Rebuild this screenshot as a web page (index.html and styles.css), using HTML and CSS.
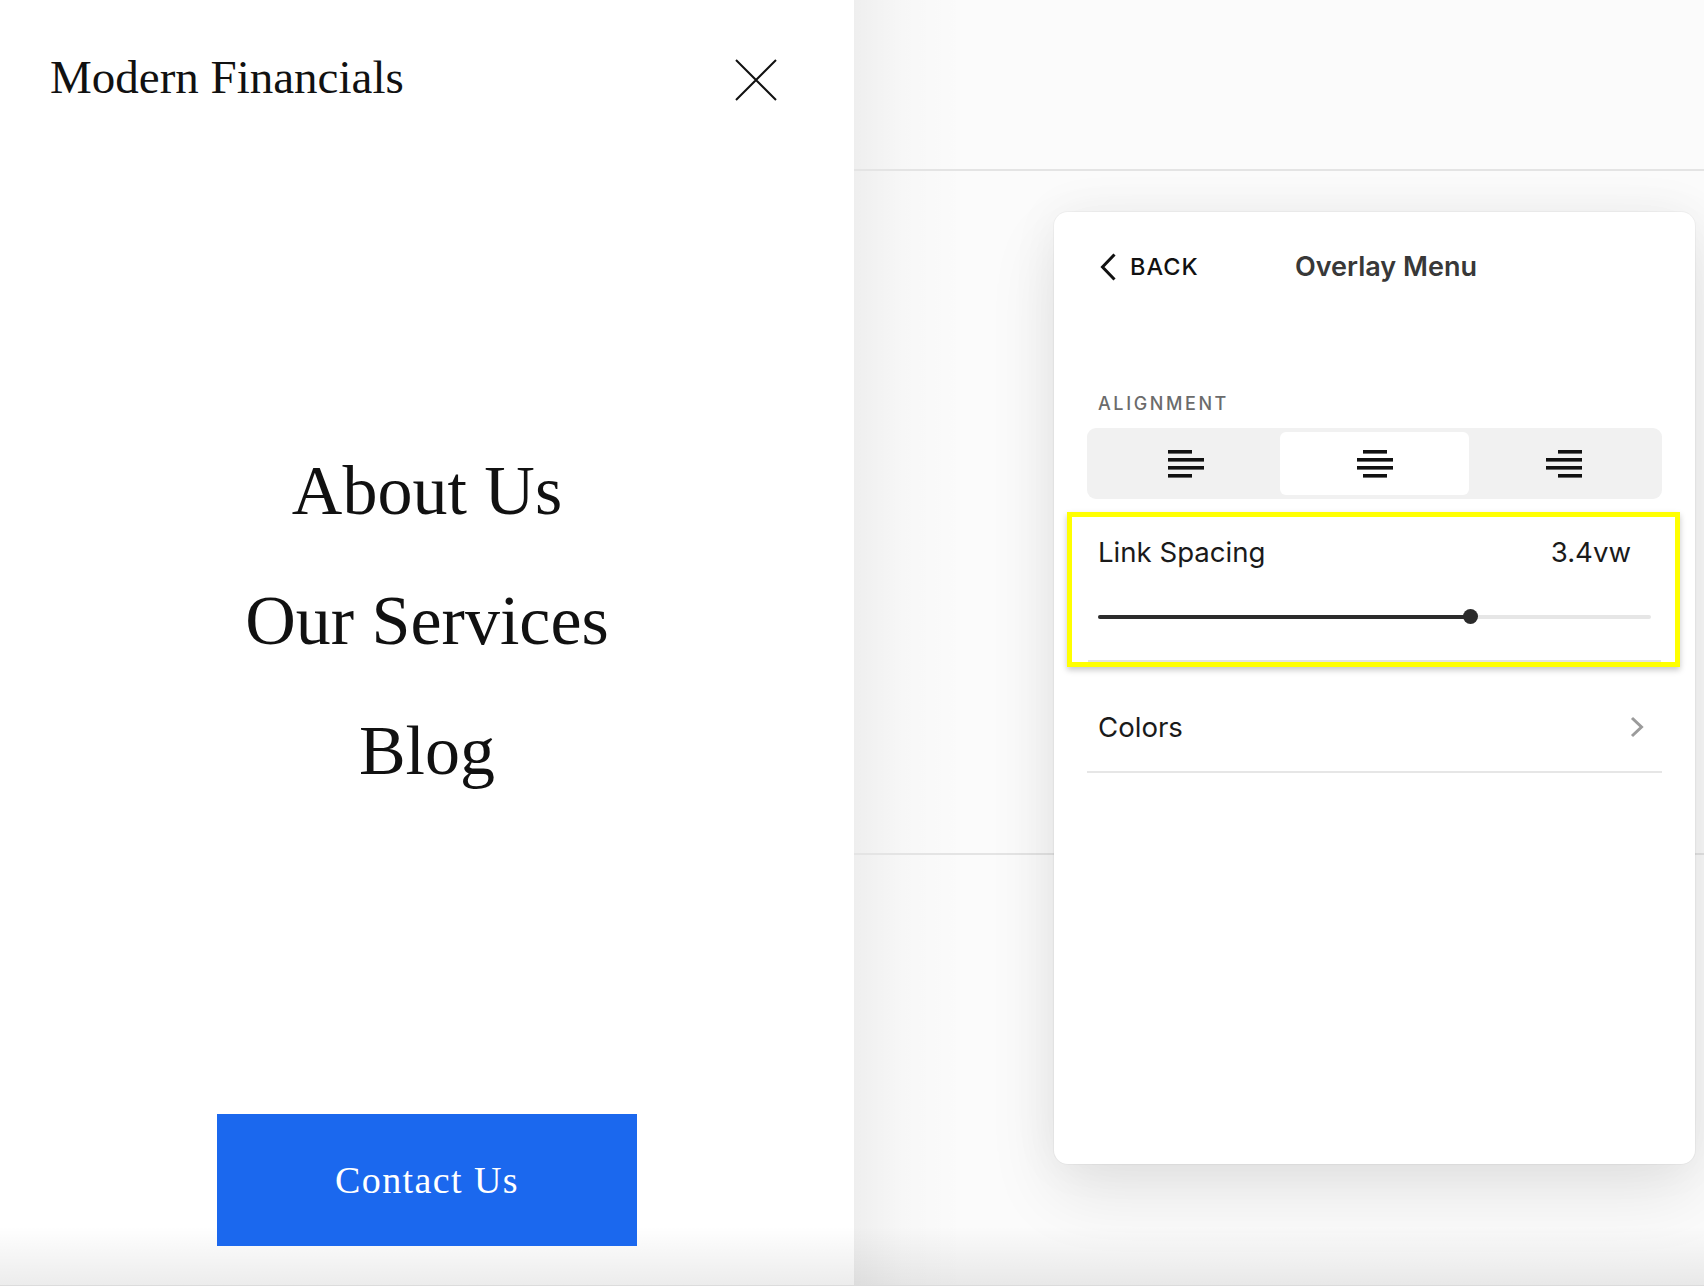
FILE: index.html
```html
<!DOCTYPE html>
<html lang="en">
<head>
<meta charset="utf-8">
<title>Overlay Menu</title>
<link rel="stylesheet" href="styles.css">
</head>
<body>
<div class="page">
  <section class="menu-preview">
    <header class="site-header">
      <span class="site-title">Modern Financials</span>
      <span class="close-btn" aria-label="Close">
        <svg width="42" height="42" viewBox="0 0 42 42"><path d="M1 1 L41 41 M41 1 L1 41" stroke="#111" stroke-width="2" fill="none"/></svg>
      </span>
    </header>
    <nav class="overlay-nav">
      <a class="nav-link">About Us</a>
      <a class="nav-link">Our Services</a>
      <a class="nav-link">Blog</a>
    </nav>
    <a class="cta">Contact Us</a>
  </section>

  <section class="editor-area">
    <div class="band band-top"></div>
    <div class="band band-mid"></div>
    <div class="band band-bottom"></div>

    <aside class="panel">
      <div class="panel-header">
        <div class="back">
          <svg width="18" height="28" viewBox="0 0 18 28"><path d="M15.5 1.5 L3.5 14 L15.5 26.5" stroke="#111" stroke-width="3" fill="none"/></svg>
          <span class="back-label">BACK</span>
        </div>
        <div class="panel-title">Overlay Menu</div>
      </div>

      <div class="section-label">ALIGNMENT</div>
      <div class="segmented">
        <div class="segment">
          <svg width="36" height="28" viewBox="0 0 36 28"><rect x="0" y="0" width="24" height="3.6"/><rect x="0" y="8" width="36" height="3.6"/><rect x="0" y="16" width="36" height="3.6"/><rect x="0" y="24" width="24" height="3.6"/></svg>
        </div>
        <div class="segment selected">
          <svg width="36" height="28" viewBox="0 0 36 28"><rect x="6" y="0" width="24" height="3.6"/><rect x="0" y="8" width="36" height="3.6"/><rect x="0" y="16" width="36" height="3.6"/><rect x="6" y="24" width="24" height="3.6"/></svg>
        </div>
        <div class="segment">
          <svg width="36" height="28" viewBox="0 0 36 28"><rect x="12" y="0" width="24" height="3.6"/><rect x="0" y="8" width="36" height="3.6"/><rect x="0" y="16" width="36" height="3.6"/><rect x="12" y="24" width="24" height="3.6"/></svg>
        </div>
      </div>

      <div class="highlight">
        <div class="spacing">
          <div class="spacing-row">
            <span>Link Spacing</span>
            <span>3.4vw</span>
          </div>
          <div class="slider">
            <div class="slider-fill" style="width:67.4%"></div>
            <div class="slider-thumb" style="left:67.4%"></div>
          </div>
        </div>
      </div>

      <div class="colors-row">
        <span>Colors</span>
        <svg width="14" height="22" viewBox="0 0 14 22"><path d="M2 2 L11.5 11 L2 20" stroke="#9b9b9b" stroke-width="3" fill="none"/></svg>
      </div>
    </aside>
  </section>

  <div class="bottom-fade"></div>
</div>
</body>
</html>
```

FILE: styles.css
```css
* { box-sizing: border-box; }

html, body {
  margin: 0;
  padding: 0;
  width: 1704px;
  height: 1286px;
  overflow: hidden;
  background: #ffffff;
}

.page {
  position: relative;
  width: 1704px;
  height: 1286px;
  display: grid;
  grid-template-columns: 854px 850px;
}

/* ---------- left: overlay menu preview ---------- */
.menu-preview {
  background: #ffffff;
  display: flex;
  flex-direction: column;
  font-family: "Liberation Serif", "Times New Roman", serif;
  color: #111111;
}

.site-header {
  display: flex;
  justify-content: space-between;
  align-items: flex-start;
  padding: 49px 77px 0 50px;
}

.site-title {
  font-size: 47px;
  line-height: 56px;
  white-space: nowrap;
}

.close-btn {
  display: block;
  margin-top: 10px;
  width: 42px;
  height: 42px;
}
.close-btn svg { display: block; }

.overlay-nav {
  margin-top: 321px;
  display: flex;
  flex-direction: column;
  align-items: center;
}

.nav-link {
  display: block;
  font-size: 70px;
  line-height: 130px;
  color: #111111;
  text-decoration: none;
  white-space: nowrap;
}

.cta {
  position: relative;
  z-index: 2;
  margin: 298px auto 0;
  width: 420px;
  height: 132px;
  display: flex;
  align-items: center;
  justify-content: center;
  background: #1b68ee;
  color: #ffffff;
  font-size: 38px;
  letter-spacing: 1.4px;
  text-decoration: none;
}

/* ---------- right: editor area ---------- */
.editor-area {
  position: relative;
  display: flex;
  flex-direction: column;
  background: #fbfbfb;
  background-image:
    linear-gradient(to right, rgba(0,0,0,0.05) 0, rgba(0,0,0,0.015) 50px, rgba(0,0,0,0) 110px);
}

.band {
  border-bottom: 2px solid #e4e4e4;
}
.band-top { height: 171px; }
.band-mid { height: 684px; }
.band-bottom { flex: 1; border-bottom: none; }

.panel {
  position: absolute;
  left: 200px;
  top: 212px;
  width: 641px;
  height: 952px;
  background: #ffffff;
  border-radius: 14px;
  padding: 40px 33px 0;
  font-family: "Inter", "Liberation Sans", Arial, sans-serif;
  color: #1a1a1a;
  box-shadow:
    0 0 0 1px rgba(0,0,0,0.03),
    0 30px 70px rgba(0,0,0,0.09),
    0 0 50px rgba(0,0,0,0.05);
}

.panel-header {
  display: grid;
  grid-template-columns: 196px 1fr;
  align-items: center;
  height: 30px;
  padding-left: 12px;
}

.back {
  display: flex;
  align-items: center;
  gap: 13px;
}
.back svg { display: block; }

.back-label {
  font-size: 23.5px;
  font-weight: 500;
  letter-spacing: 1px;
  line-height: 28px;
  color: #111111;
}

.panel-title {
  font-size: 27px;
  font-weight: 600;
  line-height: 30px;
  color: #383838;
  white-space: nowrap;
}

.section-label {
  margin-top: 111px;
  padding-left: 11px;
  font-size: 18px;
  font-weight: 500;
  letter-spacing: 2.6px;
  line-height: 22px;
  color: #6b6b6b;
}

.segmented {
  margin-top: 13px;
  height: 71px;
  padding: 4px;
  border-radius: 9px;
  background: #f1f1f1;
  display: grid;
  grid-template-columns: repeat(3, 1fr);
}

.segment {
  display: flex;
  align-items: center;
  justify-content: center;
  border-radius: 6px;
}
.segment svg { display: block; fill: #111111; }
.segment.selected { background: #ffffff; }

.highlight {
  margin: 13px -18px 0 -20px;
  border: 5px solid #ffff00;
  padding: 0 14px 0 16px;
  box-shadow: 0 3px 6px rgba(0,0,0,0.22);
  background: #ffffff;
}

.spacing {
  padding-top: 19px;
  padding-bottom: 36px;
  border-bottom: 2px solid #e3e3e3;
}

.spacing-row {
  display: flex;
  justify-content: space-between;
  padding: 0 30px 0 10px;
  font-size: 27.6px;
  line-height: 32px;
  color: #1a1a1a;
}

.slider {
  position: relative;
  margin: 41px 10px 0;
  height: 15px;
}
.slider::before {
  content: "";
  position: absolute;
  left: 0;
  right: 0;
  top: 5.5px;
  height: 4px;
  background: #e6e6e6;
  border-radius: 2px;
}
.slider-fill {
  position: absolute;
  left: 0;
  top: 5.5px;
  height: 4px;
  background: #2b2b2b;
  border-radius: 2px;
}
.slider-thumb {
  position: absolute;
  top: 0;
  width: 15px;
  height: 15px;
  margin-left: -7.5px;
  border-radius: 50%;
  background: #2b2b2b;
}

.colors-row {
  display: flex;
  justify-content: space-between;
  align-items: center;
  padding: 44px 18px 28px 11px;
  border-bottom: 2px solid #e6e6e6;
  font-size: 27.6px;
  line-height: 32px;
  color: #1a1a1a;
}
.colors-row svg { display: block; }

/* ---------- bottom fade across the screen ---------- */
.bottom-fade {
  position: absolute;
  left: 0;
  right: 0;
  bottom: 0;
  height: 60px;
  background: linear-gradient(to bottom, rgba(0,0,0,0) 0, rgba(0,0,0,0.075) 100%);
  border-bottom: 1px solid #dcdcdc;
  pointer-events: none;
  z-index: 1;
}
```
